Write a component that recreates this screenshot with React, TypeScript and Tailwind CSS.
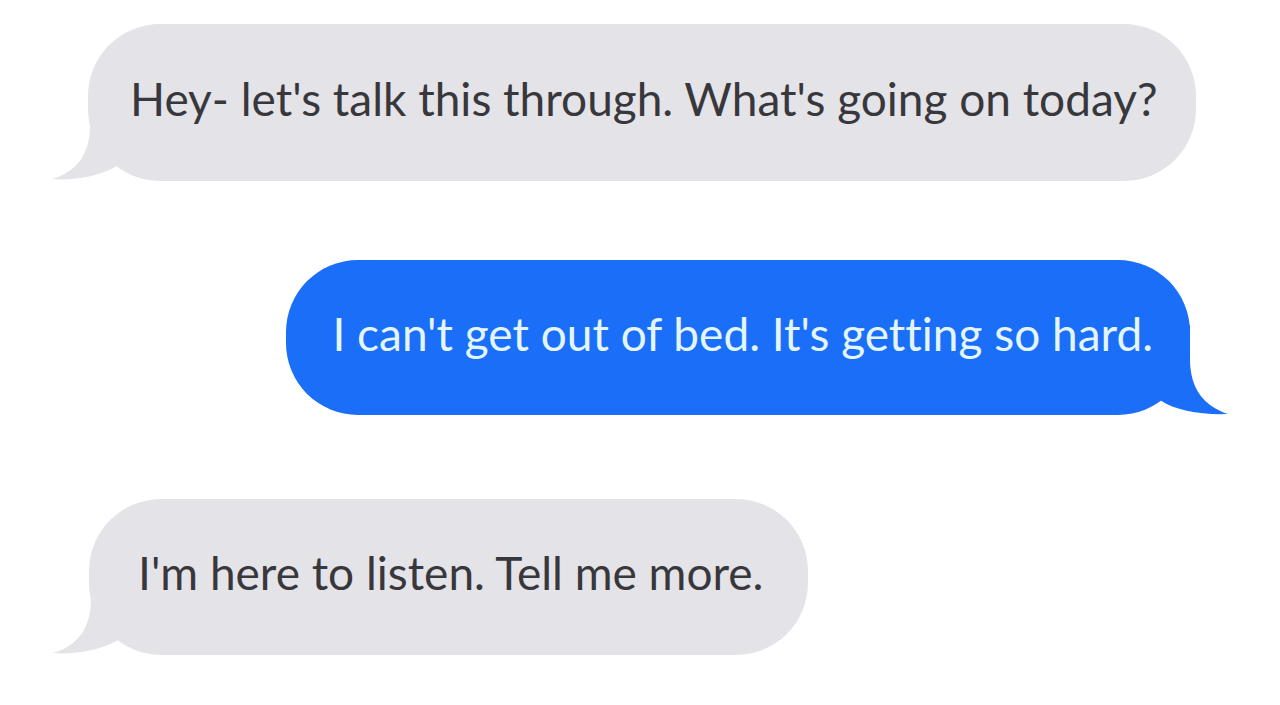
import React from 'react';

interface BubbleProps {
  text: string;
  side: 'left' | 'right';
  className?: string;
}

// tail drawn as a small svg hanging off the bottom corner
const LeftTail: React.FC<{ color: string }> = ({ color }) => (
  <svg
    className="absolute bottom-0 -left-[36px]"
    width="110"
    height="90"
    viewBox="0 0 110 90"
  >
    <path
      d="M38 0 L38 34 C38 64 24 81 0 88 C26 90 52 84 68 73 C80 82 92 87 110 88 L110 0 Z"
      fill={color}
    />
  </svg>
);

const RightTail: React.FC<{ color: string }> = ({ color }) => (
  <svg
    className="absolute bottom-0 -right-[38px]"
    width="110"
    height="90"
    viewBox="0 0 110 90"
  >
    <path
      d="M72 0 L72 34 C72 64 86 81 110 89 C84 90 58 86 42 75 C30 84 18 88 0 89 L0 0 Z"
      fill={color}
    />
  </svg>
);

const Bubble: React.FC<BubbleProps> = ({ text, side, className = '' }) => {
  const isLeft = side === 'left';
  const color = isLeft ? '#e4e3e8' : '#1a6ef7';
  return (
    <div
      className={`relative flex items-center rounded-[72px] ${
        isLeft ? 'bg-[#e4e3e8] text-[#38383c]' : 'bg-[#1a6ef7] text-[#e3f6ff]'
      } ${className}`}
    >
      {isLeft ? <LeftTail color={color} /> : <RightTail color={color} />}
      <span className="relative -mt-[8px] whitespace-nowrap text-[46px] leading-none font-['Lato',sans-serif] [font-variant-ligatures:none]">
        {text}
      </span>
    </div>
  );
};

export default function App() {
  return (
    <div className="flex h-[705px] w-full flex-col bg-white pt-[24px]">
      <Bubble
        side="left"
        text="Hey- let's talk this through. What's going on today?"
        className="ml-[88px] h-[157px] self-start pl-[42px] pr-[38px]"
      />
      <Bubble
        side="right"
        text="I can't get out of bed. It's getting so hard."
        className="mr-[90px] mt-[79px] h-[155px] self-end pl-[46px] pr-[37px]"
      />
      <Bubble
        side="left"
        text="I'm here to listen. Tell me more."
        className="ml-[89px] mt-[84px] h-[156px] self-start pl-[49px] pr-[45px]"
      />
    </div>
  );
}
